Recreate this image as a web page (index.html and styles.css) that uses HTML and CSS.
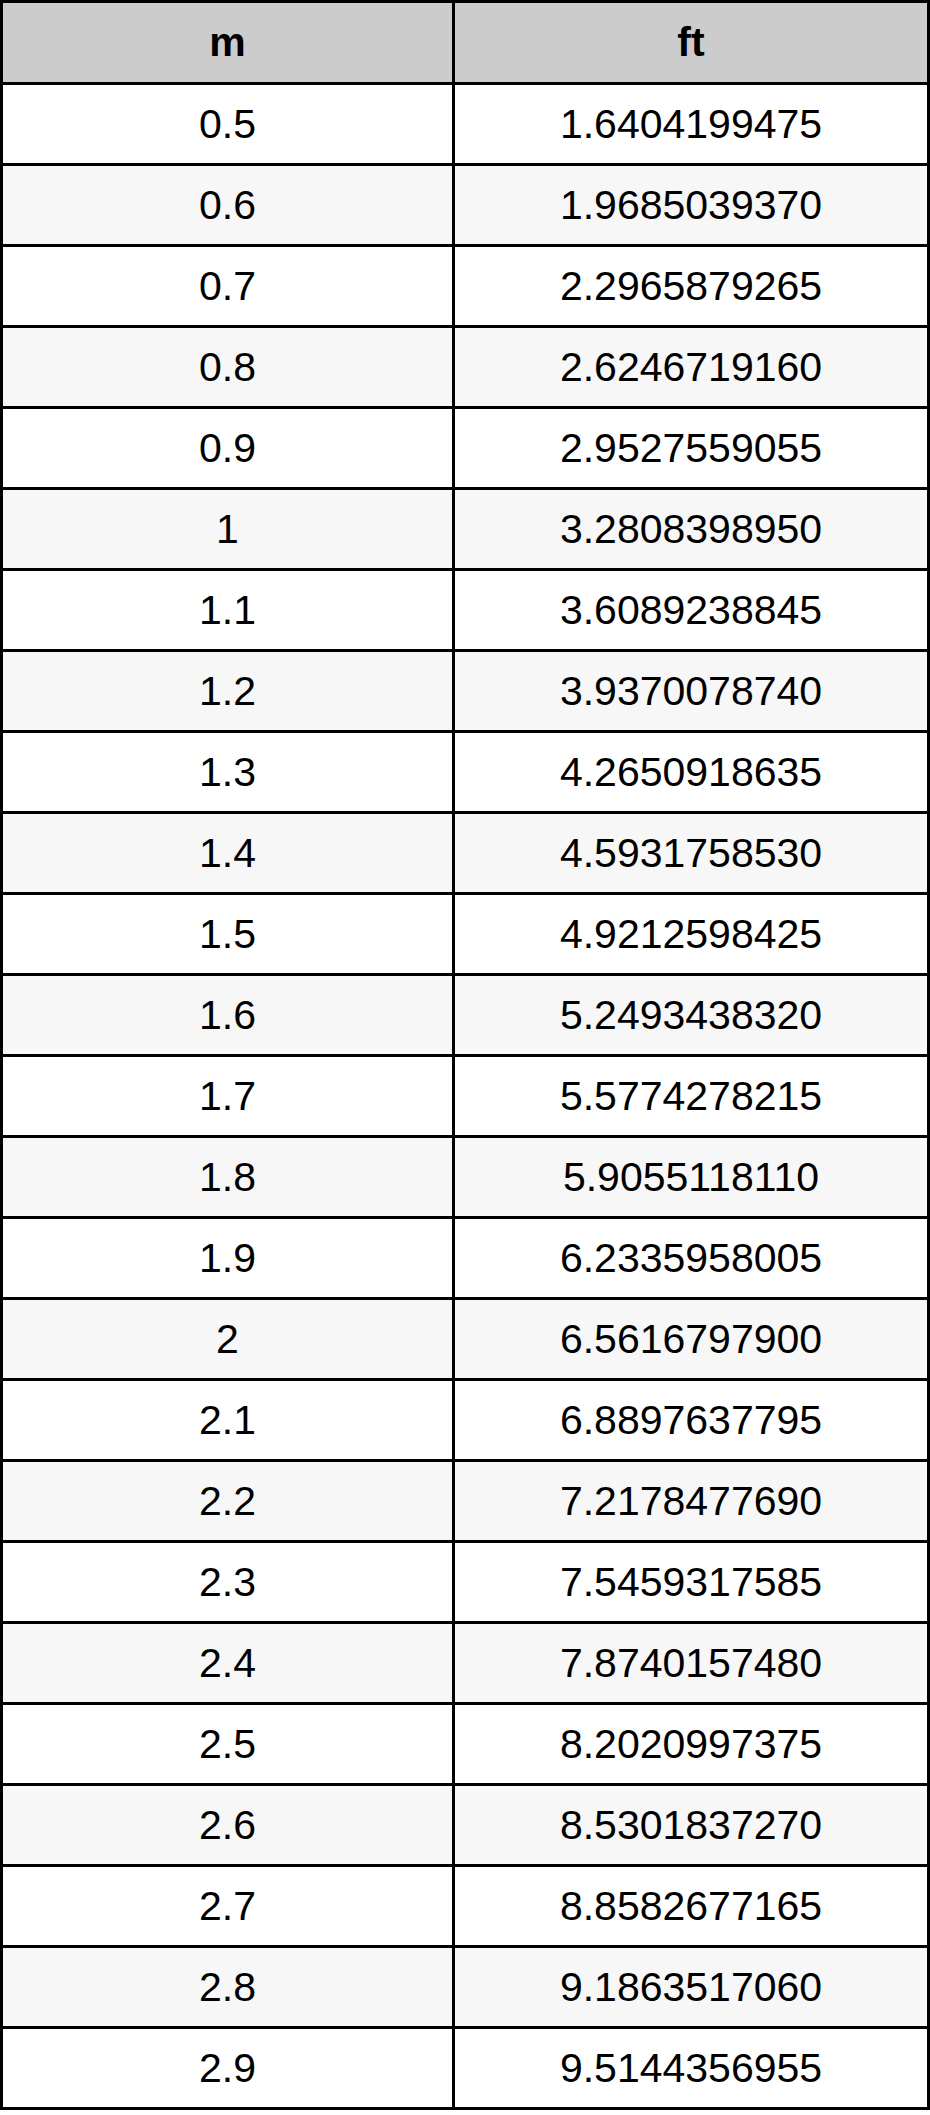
FILE: index.html
```html
<!DOCTYPE html>
<html>
<head>
<meta charset="utf-8">
<link rel="stylesheet" href="styles.css">
</head>
<body>
<table class="conv">
<thead>
<tr><th class="col-m">m</th><th class="col-ft">ft</th></tr>
</thead>
<tbody>
<tr><td>0.5</td><td>1.6404199475</td></tr>
<tr><td>0.6</td><td>1.9685039370</td></tr>
<tr><td>0.7</td><td>2.2965879265</td></tr>
<tr><td>0.8</td><td>2.6246719160</td></tr>
<tr><td>0.9</td><td>2.9527559055</td></tr>
<tr><td>1</td><td>3.2808398950</td></tr>
<tr><td>1.1</td><td>3.6089238845</td></tr>
<tr><td>1.2</td><td>3.9370078740</td></tr>
<tr><td>1.3</td><td>4.2650918635</td></tr>
<tr><td>1.4</td><td>4.5931758530</td></tr>
<tr><td>1.5</td><td>4.9212598425</td></tr>
<tr><td>1.6</td><td>5.2493438320</td></tr>
<tr><td>1.7</td><td>5.5774278215</td></tr>
<tr><td>1.8</td><td>5.9055118110</td></tr>
<tr><td>1.9</td><td>6.2335958005</td></tr>
<tr><td>2</td><td>6.5616797900</td></tr>
<tr><td>2.1</td><td>6.8897637795</td></tr>
<tr><td>2.2</td><td>7.2178477690</td></tr>
<tr><td>2.3</td><td>7.5459317585</td></tr>
<tr><td>2.4</td><td>7.8740157480</td></tr>
<tr><td>2.5</td><td>8.2020997375</td></tr>
<tr><td>2.6</td><td>8.5301837270</td></tr>
<tr><td>2.7</td><td>8.8582677165</td></tr>
<tr><td>2.8</td><td>9.1863517060</td></tr>
<tr><td>2.9</td><td>9.5144356955</td></tr>
</tbody>
</table>
</body>
</html>
```
FILE: styles.css
```css
html, body {
  margin: 0;
  padding: 0;
  background: #ffffff;
}

.conv {
  width: 930px;
  border-collapse: collapse;
  table-layout: fixed;
  font-family: "Liberation Sans", Arial, sans-serif;
  color: #000000;
}

.conv th,
.conv td {
  border: 3px solid #000000;
  padding: 0;
  text-align: center;
  vertical-align: middle;
  font-size: 41px;
  line-height: 1;
}

.conv th {
  background: #cccccc;
  font-weight: bold;
  height: 79px;
}

.conv td {
  height: 78px;
  font-weight: normal;
}

.conv .col-m {
  width: 449px;
}

.conv tbody tr:nth-child(even) td {
  background: #f7f7f7;
}

.conv tbody tr:nth-child(odd) td {
  background: #ffffff;
}
```
